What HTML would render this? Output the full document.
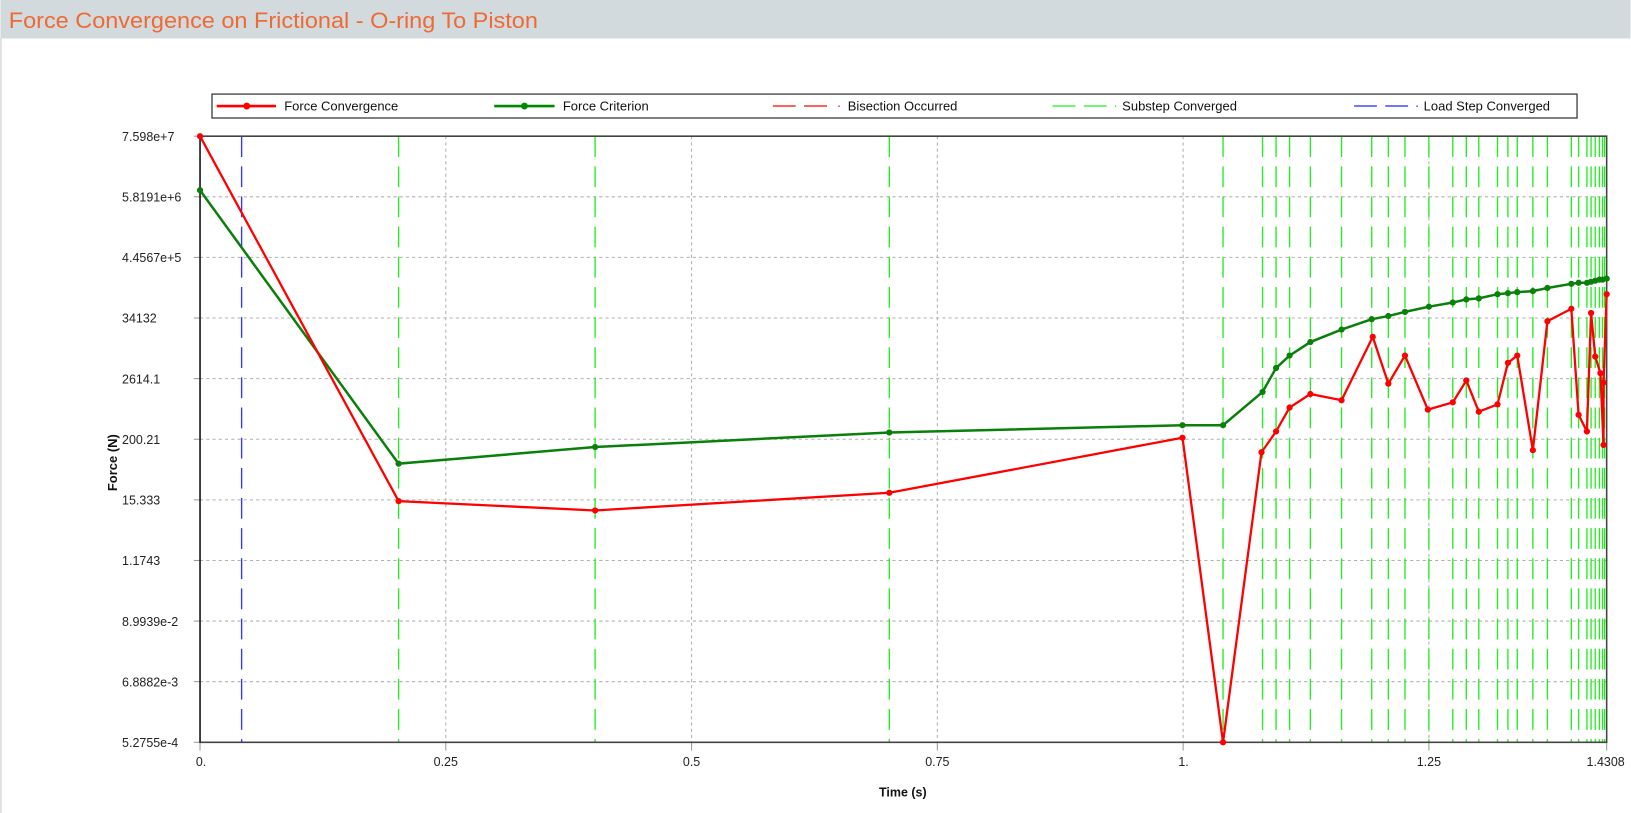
<!DOCTYPE html>
<html><head><meta charset="utf-8"><style>
html,body{margin:0;padding:0;background:#fff;width:1631px;height:813px;overflow:hidden}
svg{display:block}
text{font-family:"Liberation Sans",sans-serif}
</style></head><body>
<svg width="1631" height="813" viewBox="0 0 1568 782" xmlns="http://www.w3.org/2000/svg">
<rect x="0" y="0" width="1568" height="782" fill="#fff"/>
<rect x="0" y="0" width="1568" height="37" fill="#d3dade"/>
<line x1="0.5" y1="37" x2="0.5" y2="782" stroke="#c8c8c8"/>
<text x="8" y="27" font-size="21" fill="#ee6a35" textLength="509" lengthAdjust="spacingAndGlyphs">Force Convergence on Frictional - O-ring To Piston</text>

<!-- legend -->
<rect x="203.5" y="90.5" width="1313" height="23" fill="#fff" stroke="#333" stroke-width="1.2"/>
<g font-size="12.5" fill="#111">
<line x1="208" y1="102" x2="265" y2="102" stroke="#f00" stroke-width="2.5"/><circle cx="237" cy="102" r="3.3" fill="#f00"/>
<text x="273" y="106.5">Force Convergence</text>
<line x1="475" y1="102" x2="533" y2="102" stroke="#080" stroke-width="2.5"/><circle cx="504" cy="102" r="3.3" fill="#080"/>
<text x="541" y="106.5">Force Criterion</text>
<line x1="743" y1="102" x2="800" y2="102" stroke="#f00" stroke-width="1.2" stroke-dasharray="22 8"/><rect x="806" y="101.5" width="1.3" height="1.3" fill="#f00"/>
<text x="815" y="106.5">Bisection Occurred</text>
<line x1="1012" y1="102" x2="1068" y2="102" stroke="#2e2" stroke-width="1.2" stroke-dasharray="22 8"/><rect x="1072" y="101.5" width="1.3" height="1.3" fill="#2e2"/>
<text x="1079" y="106.5">Substep Converged</text>
<line x1="1302" y1="102" x2="1358" y2="102" stroke="#22f" stroke-width="1.2" stroke-dasharray="22 8"/><rect x="1362" y="101.5" width="1.3" height="1.3" fill="#22f"/>
<text x="1369" y="106.5">Load Step Converged</text>
</g>

<!-- grid -->
<g stroke="#b0b0b0" stroke-width="1" stroke-dasharray="3 3">
<line x1="192" y1="189.3" x2="1545" y2="189.3"/><line x1="192" y1="247.6" x2="1545" y2="247.6"/>
<line x1="192" y1="305.9" x2="1545" y2="305.9"/><line x1="192" y1="364.2" x2="1545" y2="364.2"/>
<line x1="192" y1="422.5" x2="1545" y2="422.5"/><line x1="192" y1="480.8" x2="1545" y2="480.8"/>
<line x1="192" y1="539.1" x2="1545" y2="539.1"/><line x1="192" y1="597.4" x2="1545" y2="597.4"/>
<line x1="192" y1="655.7" x2="1545" y2="655.7"/>
<line x1="428.4" y1="131" x2="428.4" y2="714"/><line x1="664.8" y1="131" x2="664.8" y2="714"/>
<line x1="901.2" y1="131" x2="901.2" y2="714"/><line x1="1137.6" y1="131" x2="1137.6" y2="714"/>
<line x1="1374" y1="131" x2="1374" y2="714"/>
</g>
<!-- ticks -->
<g stroke="#999" stroke-width="1">
<line x1="186" y1="131" x2="192" y2="131"/><line x1="186" y1="189.3" x2="192" y2="189.3"/><line x1="186" y1="247.6" x2="192" y2="247.6"/><line x1="186" y1="305.9" x2="192" y2="305.9"/><line x1="186" y1="364.2" x2="192" y2="364.2"/><line x1="186" y1="422.5" x2="192" y2="422.5"/><line x1="186" y1="480.8" x2="192" y2="480.8"/><line x1="186" y1="539.1" x2="192" y2="539.1"/><line x1="186" y1="597.4" x2="192" y2="597.4"/><line x1="186" y1="655.7" x2="192" y2="655.7"/><line x1="186" y1="714" x2="192" y2="714"/>
<line x1="192" y1="714" x2="192" y2="722"/><line x1="428.4" y1="714" x2="428.4" y2="722"/><line x1="664.8" y1="714" x2="664.8" y2="722"/><line x1="901.2" y1="714" x2="901.2" y2="722"/><line x1="1137.6" y1="714" x2="1137.6" y2="722"/><line x1="1374" y1="714" x2="1374" y2="722"/><line x1="1545" y1="714" x2="1545" y2="722"/>
</g>

<!-- substep lines -->
<g stroke="#22ee22" stroke-width="1.3" stroke-dasharray="20 9">
<line x1="383" y1="131" x2="383" y2="714"/><line x1="572" y1="131" x2="572" y2="714"/><line x1="855" y1="131" x2="855" y2="714"/>
<line x1="1176" y1="131" x2="1176" y2="714"/><line x1="1214" y1="131" x2="1214" y2="714"/><line x1="1227" y1="131" x2="1227" y2="714"/>
<line x1="1240" y1="131" x2="1240" y2="714"/><line x1="1260" y1="131" x2="1260" y2="714"/><line x1="1290" y1="131" x2="1290" y2="714"/>
<line x1="1319" y1="131" x2="1319" y2="714"/><line x1="1335" y1="131" x2="1335" y2="714"/><line x1="1351" y1="131" x2="1351" y2="714"/>
<line x1="1374" y1="131" x2="1374" y2="714"/><line x1="1397" y1="131" x2="1397" y2="714"/><line x1="1410" y1="131" x2="1410" y2="714"/>
<line x1="1422" y1="131" x2="1422" y2="714"/><line x1="1440" y1="131" x2="1440" y2="714"/><line x1="1450" y1="131" x2="1450" y2="714"/>
<line x1="1459" y1="131" x2="1459" y2="714"/><line x1="1474" y1="131" x2="1474" y2="714"/><line x1="1488" y1="131" x2="1488" y2="714"/>
<line x1="1511" y1="131" x2="1511" y2="714"/><line x1="1518" y1="131" x2="1518" y2="714"/><line x1="1526" y1="131" x2="1526" y2="714"/>
<line x1="1530" y1="131" x2="1530" y2="714"/><line x1="1534" y1="131" x2="1534" y2="714"/><line x1="1538" y1="131" x2="1538" y2="714"/>
<line x1="1541" y1="131" x2="1541" y2="714"/><line x1="1543" y1="131" x2="1543" y2="714"/>
</g>
<line x1="232" y1="131" x2="232" y2="714" stroke="#3333ff" stroke-width="1.3" stroke-dasharray="20 9"/>

<!-- axes -->
<path d="M192 131 H1545 V714 H192 Z" fill="none" stroke="#444" stroke-width="1.5"/>
<line x1="192" y1="131" x2="192" y2="714" stroke="#111" stroke-width="1.2"/>

<!-- green series -->
<polyline fill="none" stroke="#0a7f0a" stroke-width="2.4" points="192,183 383,446 572,430 855,416 1137,409 1176,409 1214,377 1227,354 1240,342 1260,329 1290,317 1319,307 1335,304 1351,300 1374,295 1397,291 1410,288 1422,287 1440,283 1450,282 1459,281 1474,280 1488,277 1511,273 1518,272 1526,272 1530,271 1534,270 1538,269 1541,269 1545,268"/>
<g fill="#0a7f0a">
<circle cx="192" cy="183" r="3"/><circle cx="383" cy="446" r="3"/><circle cx="572" cy="430" r="3"/><circle cx="855" cy="416" r="3"/><circle cx="1137" cy="409" r="3"/><circle cx="1176" cy="409" r="3"/><circle cx="1214" cy="377" r="3"/><circle cx="1227" cy="354" r="3"/><circle cx="1240" cy="342" r="3"/><circle cx="1260" cy="329" r="3"/><circle cx="1290" cy="317" r="3"/><circle cx="1319" cy="307" r="3"/><circle cx="1335" cy="304" r="3"/><circle cx="1351" cy="300" r="3"/><circle cx="1374" cy="295" r="3"/><circle cx="1397" cy="291" r="3"/><circle cx="1410" cy="288" r="3"/><circle cx="1422" cy="287" r="3"/><circle cx="1440" cy="283" r="3"/><circle cx="1450" cy="282" r="3"/><circle cx="1459" cy="281" r="3"/><circle cx="1474" cy="280" r="3"/><circle cx="1488" cy="277" r="3"/><circle cx="1511" cy="273" r="3"/><circle cx="1518" cy="272" r="3"/><circle cx="1526" cy="272" r="3"/><circle cx="1530" cy="271" r="3"/><circle cx="1534" cy="270" r="3"/><circle cx="1538" cy="269" r="3"/><circle cx="1541" cy="269" r="3"/><circle cx="1545" cy="268" r="3"/>
</g>

<!-- red series -->
<polyline fill="none" stroke="#f00" stroke-width="2.2" points="192,131 383,482 572,491 855,474 1137,421 1176,714 1213,435 1227,415 1240,392 1260,379 1290,385 1320,324 1335,369 1351,342 1373,394 1397,387 1410,366 1422,396 1440,389 1450,349 1459,342 1474,433 1488,309 1511,297 1518,399 1526,415 1530,301 1534,343 1539,359 1542,428 1542,368 1545,283"/>
<g fill="#f00">
<circle cx="192" cy="131" r="3"/><circle cx="383" cy="482" r="3"/><circle cx="572" cy="491" r="3"/><circle cx="855" cy="474" r="3"/><circle cx="1137" cy="421" r="3"/><circle cx="1176" cy="714" r="3"/><circle cx="1213" cy="435" r="3"/><circle cx="1227" cy="415" r="3"/><circle cx="1240" cy="392" r="3"/><circle cx="1260" cy="379" r="3"/><circle cx="1290" cy="385" r="3"/><circle cx="1320" cy="324" r="3"/><circle cx="1335" cy="369" r="3"/><circle cx="1351" cy="342" r="3"/><circle cx="1373" cy="394" r="3"/><circle cx="1397" cy="387" r="3"/><circle cx="1410" cy="366" r="3"/><circle cx="1422" cy="396" r="3"/><circle cx="1440" cy="389" r="3"/><circle cx="1450" cy="349" r="3"/><circle cx="1459" cy="342" r="3"/><circle cx="1474" cy="433" r="3"/><circle cx="1488" cy="309" r="3"/><circle cx="1511" cy="297" r="3"/><circle cx="1518" cy="399" r="3"/><circle cx="1526" cy="415" r="3"/><circle cx="1530" cy="301" r="3"/><circle cx="1534" cy="343" r="3"/><circle cx="1539" cy="359" r="3"/><circle cx="1542" cy="428" r="3"/><circle cx="1542" cy="368" r="3"/><circle cx="1545" cy="283" r="3"/>
</g>

<!-- y labels -->
<g font-size="12" fill="#222">
<text x="117" y="135.5">7.598e+7</text>
<text x="117" y="193.8">5.8191e+6</text>
<text x="117" y="252.1">4.4567e+5</text>
<text x="117" y="310.4">34132</text>
<text x="117" y="368.7">2614.1</text>
<text x="117" y="427">200.21</text>
<text x="117" y="485.3">15.333</text>
<text x="117" y="543.6">1.1743</text>
<text x="117" y="601.9">8.9939e-2</text>
<text x="117" y="660.2">6.8882e-3</text>
<text x="117" y="718.5">5.2755e-4</text>
</g>
<!-- x labels -->
<g font-size="12" fill="#222" text-anchor="middle">
<text x="193" y="737">0.</text>
<text x="428.4" y="737">0.25</text>
<text x="664.8" y="737">0.5</text>
<text x="901.2" y="737">0.75</text>
<text x="1138" y="737">1.</text>
<text x="1374" y="737">1.25</text>
<text x="1544" y="737">1.4308</text>
</g>
<text x="868" y="766" font-size="12" font-weight="bold" fill="#111" text-anchor="middle">Time (s)</text>
<text transform="translate(112,445) rotate(-90)" font-size="12.5" font-weight="bold" fill="#111" text-anchor="middle">Force (N)</text>
</svg>
</body></html>
